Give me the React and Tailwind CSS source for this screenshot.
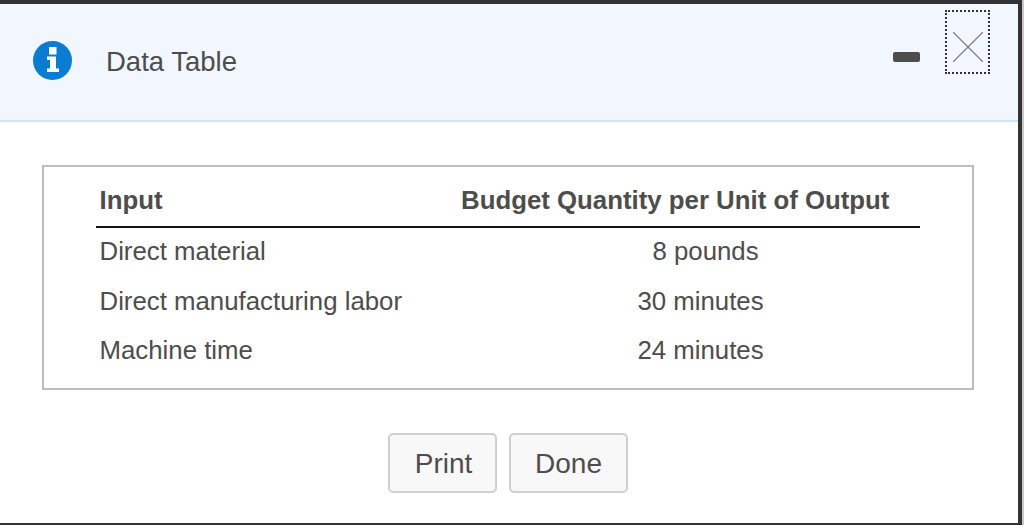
const rows = [
  { input: "Direct material", qty: "8 pounds", pad: "pl-[34px]" },
  { input: "Direct manufacturing labor", qty: "30 minutes", pad: "pl-6" },
  { input: "Machine time", qty: "24 minutes", pad: "pl-6" },
];

export default function App() {
  return (
    <div className="h-[525px] w-[1024px] overflow-hidden bg-[#c8c8c8] pr-[2px] font-['Liberation_Sans',Arial,sans-serif] text-[#4d4d4d]">
      <div className="flex h-full flex-col border-t-4 border-r-4 border-b-2 border-[#333333] bg-white">
        {/* Header */}
        <div className="flex h-[118px] shrink-0 border-b-2 border-[#cde5f9] bg-[#f2f7ff]">
          <div className="flex flex-1 items-center pl-[33px]">
            <svg className="mb-[2px] h-10 w-10 shrink-0" viewBox="0 0 40 40">
              <circle cx="19.5" cy="19.5" r="19.5" fill="#0a7cd2" />
              <path fill="#ffffff" d="M16 6h7.5v7.5H16zM14 15.5h9v12h3V31H14v-3.5h3v-8.5h-3z" />
            </svg>
            <span className="ml-[33px] text-[27.5px]">Data Table</span>
          </div>
          <div className="flex items-start pr-[28px]">
            <div className="mt-[48px] mr-[25px] h-[10px] w-[27px] rounded-[2px] bg-[#4d4d4d]" />
            <button className="mt-[6px] flex h-[64px] w-[45px] items-start justify-center border-2 border-dotted border-[#333333] pt-[20px]">
              <svg className="h-[30px] w-[30px] shrink-0" viewBox="0 0 30 30" fill="none" stroke="#808080" strokeWidth="1.3">
                <path d="M0 0l30 30M30 0L0 30" />
              </svg>
            </button>
          </div>
        </div>

        {/* Table */}
        <div className="mx-[42px] mt-[43px] h-[225px] w-[932px] border-2 border-[#bdbdbd] px-[52px] pt-[14px]">
          <div className="grid h-[47px] grid-cols-[361px_1fr] items-center border-b-2 border-[#111111] pb-[6px] text-[25.8px] font-bold">
            <span className="pl-[3.5px]">Input</span>
            <span className="pl-1">Budget Quantity per Unit of Output</span>
          </div>
          {rows.map((row) => (
            <div key={row.input} className="grid h-[49.25px] grid-cols-[361px_1fr] items-center pb-[2px] text-[25.8px]">
              <span className="pl-[3.5px]">{row.input}</span>
              <span className={`text-center ${row.pad}`}>{row.qty}</span>
            </div>
          ))}
        </div>

        {/* Buttons */}
        <div className="mt-[43px] flex justify-center gap-[12px] pr-[2px]">
          <button className="h-[60px] w-[109px] rounded-[5px] border-2 border-[#d0d0d0] bg-[#f8f8f8] pt-[2px] pl-[2px] text-[28px]">Print</button>
          <button className="h-[60px] w-[119px] rounded-[5px] border-2 border-[#d0d0d0] bg-[#f8f8f8] pt-[2px] text-[28px]">Done</button>
        </div>
      </div>
    </div>
  );
}
